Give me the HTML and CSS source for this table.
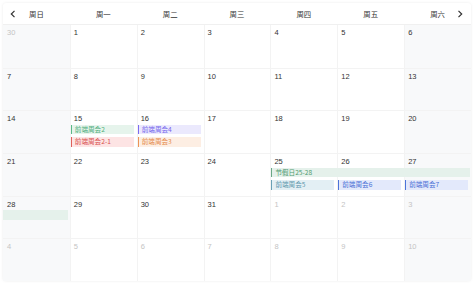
FILE: index.html
```html
<!DOCTYPE html>
<html lang="zh">
<head>
<meta charset="utf-8">
<title>Calendar</title>
<link rel="stylesheet" href="styles.css">
</head>
<body>
<div class="cal">
  <div class="head">
    <div class="hcell edge-l">
      <span class="nav"><svg width="6" height="8" viewBox="0 0 6 8"><path d="M4.5 0.8 L1.3 4 L4.5 7.2" fill="none" stroke="#333" stroke-width="1.2"/></svg></span>
      <span class="lbl">周日</span>
    </div>
    <div class="hcell">周一</div>
    <div class="hcell">周二</div>
    <div class="hcell">周三</div>
    <div class="hcell">周四</div>
    <div class="hcell">周五</div>
    <div class="hcell edge-r">
      <span class="lbl">周六</span>
      <span class="nav"><svg width="6" height="8" viewBox="0 0 6 8"><path d="M1.5 0.8 L4.7 4 L1.5 7.2" fill="none" stroke="#333" stroke-width="1.2"/></svg></span>
    </div>
  </div>
  <div class="weeks">
    <div class="week">
      <div class="bg c1 wkend"></div><div class="bg c2"></div><div class="bg c3"></div><div class="bg c4"></div><div class="bg c5"></div><div class="bg c6"></div><div class="bg c7 wkend"></div>
      <div class="num c1 muted">30</div><div class="num c2">1</div><div class="num c3">2</div><div class="num c4">3</div><div class="num c5">4</div><div class="num c6">5</div><div class="num c7">6</div>
    </div>
    <div class="week">
      <div class="bg c1 wkend"></div><div class="bg c2"></div><div class="bg c3"></div><div class="bg c4"></div><div class="bg c5"></div><div class="bg c6"></div><div class="bg c7 wkend"></div>
      <div class="num c1">7</div><div class="num c2">8</div><div class="num c3">9</div><div class="num c4">10</div><div class="num c5">11</div><div class="num c6">12</div><div class="num c7">13</div>
    </div>
    <div class="week">
      <div class="bg c1 wkend"></div><div class="bg c2"></div><div class="bg c3"></div><div class="bg c4"></div><div class="bg c5"></div><div class="bg c6"></div><div class="bg c7 wkend"></div>
      <div class="num c1">14</div><div class="num c2">15</div><div class="num c3">16</div><div class="num c4">17</div><div class="num c5">18</div><div class="num c6">19</div><div class="num c7">20</div>
      <div class="ev green c2 r2">前端周会2</div>
      <div class="ev red c2 r3">前端周会2-1</div>
      <div class="ev purple c3 r2">前端周会4</div>
      <div class="ev orange c3 r3">前端周会3</div>
    </div>
    <div class="week">
      <div class="bg c1 wkend"></div><div class="bg c2"></div><div class="bg c3"></div><div class="bg c4"></div><div class="bg c5"></div><div class="bg c6"></div><div class="bg c7 wkend"></div>
      <div class="num c1">21</div><div class="num c2">22</div><div class="num c3">23</div><div class="num c4">24</div><div class="num c5">25</div><div class="num c6">26</div><div class="num c7">27</div>
      <div class="ev holiday span4-7 r2">节假日25-28</div>
      <div class="ev teal c5 r3">前端周会5</div>
      <div class="ev blue c6 r3">前端周会6</div>
      <div class="ev blue c7 r3">前端周会7</div>
    </div>
    <div class="week">
      <div class="bg c1 wkend"></div><div class="bg c2"></div><div class="bg c3"></div><div class="bg c4"></div><div class="bg c5"></div><div class="bg c6"></div><div class="bg c7 wkend"></div>
      <div class="num c1">28</div><div class="num c2">29</div><div class="num c3">30</div><div class="num c4">31</div><div class="num c5 muted">1</div><div class="num c6 muted">2</div><div class="num c7 muted">3</div>
      <div class="ev holiday cont c1 r2"></div>
    </div>
    <div class="week">
      <div class="bg c1 wkend"></div><div class="bg c2"></div><div class="bg c3"></div><div class="bg c4"></div><div class="bg c5"></div><div class="bg c6"></div><div class="bg c7 wkend"></div>
      <div class="num c1 muted">4</div><div class="num c2 muted">5</div><div class="num c3 muted">6</div><div class="num c4 muted">7</div><div class="num c5 muted">8</div><div class="num c6 muted">9</div><div class="num c7 muted">10</div>
    </div>
  </div>
</div>
</body>
</html>
```

FILE: styles.css
```css
* { box-sizing: border-box; }
html, body { margin: 0; padding: 0; background: #fff; }
body {
  padding: 3px;
  font-family: "Liberation Sans", "Noto Sans CJK SC", sans-serif;
  color: #333;
}
.cal {
  width: 468px;
  height: 278px;
  background: #fff;
  border-radius: 3px;
  box-shadow: 0 0 3px rgba(0,0,0,0.08);
  display: flex;
  flex-direction: column;
}
.head {
  height: 22px;
  display: grid;
  grid-template-columns: repeat(7, 1fr);
  border-bottom: 1px solid #f0f0f0;
}
.hcell {
  display: flex;
  align-items: center;
  justify-content: center;
  font-family: "Noto Sans CJK SC", sans-serif;
  font-size: 7.4px;
  color: #333;
}
.edge-l, .edge-r {
  display: grid;
  grid-template-columns: 1fr auto 1fr;
  align-items: center;
}
.edge-l .nav { justify-self: start; padding-left: 7px; }
.edge-r .nav { grid-column: 3; justify-self: end; padding-right: 8px; }
.edge-l .lbl, .edge-r .lbl { grid-column: 2; }
.nav { display: flex; align-items: center; }
.weeks {
  flex: 1;
  display: grid;
  grid-template-rows: repeat(6, 1fr);
}
.week {
  display: grid;
  grid-template-columns: repeat(7, 1fr);
  grid-template-rows: 13.5px 12.5px 12.5px 1fr;
  border-top: 1px solid #f3f3f3;
}
.week:first-child { border-top: 0; }
.bg { grid-row: 1 / -1; }
.bg + .bg { border-left: 1px solid #f3f3f3; }
.wkend { background: #f8f9fa; }
.c1 { grid-column: 1; }
.c2 { grid-column: 2; }
.c3 { grid-column: 3; }
.c4 { grid-column: 4; }
.c5 { grid-column: 5; }
.c6 { grid-column: 6; }
.c7 { grid-column: 7; }
.span4-7 { grid-column: 5 / 8; }
.num {
  grid-row: 1;
  font-size: 7.5px;
  line-height: 9px;
  padding: 3px 0 0 4px;
  color: #333;
}
.muted { color: #c4c4c4; }
.r2 { grid-row: 2; }
.r3 { grid-row: 3; }
.ev {
  align-self: start;
  height: 9.5px;
  line-height: 9.5px;
  margin: 0 3px 0 1px;
  padding-left: 3px;
  border-left: 1.5px solid;
  font-family: "Noto Sans CJK SC", sans-serif;
  font-size: 6.6px;
  white-space: nowrap;
  overflow: hidden;
}
.green { background: #e6f4ec; border-color: #5cb887; color: #4fae7c; }
.red { background: #fde4e4; border-color: #e0605b; color: #d9534f; }
.purple { background: #ebe9fd; border-color: #7c6cf0; color: #7566ec; }
.orange { background: #fdeee3; border-color: #ec9456; color: #e58a4a; }
.holiday { background: #e5f1eb; border-color: #6aa886; color: #4f9a70; margin-right: 1px; }
.holiday.cont { border-left: 0; margin: 0 2px 0 0; }
.teal { background: #e3eff4; border-color: #6aa0b5; color: #5f98ae; }
.blue { background: #e3e9fb; border-color: #4d74d9; color: #4a70d6; }
```
